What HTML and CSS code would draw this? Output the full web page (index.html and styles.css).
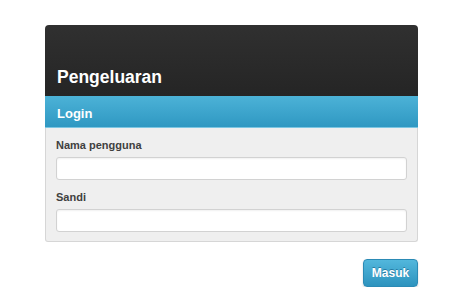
FILE: index.html
```html
<!DOCTYPE html>
<html lang="id">
<head>
<meta charset="utf-8">
<title>Pengeluaran</title>
<link rel="stylesheet" href="styles.css">
</head>
<body>
<div class="page">
  <div class="card">
    <div class="card-header">
      <h1 class="title">Pengeluaran</h1>
    </div>
    <div class="card-bar">Login</div>
    <form class="card-body">
      <label class="label" for="user">Nama pengguna</label>
      <input class="input" id="user" type="text">
      <label class="label label-second" for="pass">Sandi</label>
      <input class="input" id="pass" type="password">
    </form>
  </div>
  <div class="actions">
    <button class="btn" type="button">Masuk</button>
  </div>
</div>
</body>
</html>
```
FILE: styles.css
```css
html, body {
  margin: 0;
  padding: 0;
  background: #ffffff;
}
body {
  font-family: "Liberation Sans", Arial, sans-serif;
}
.page {
  width: 373px;
  margin-left: 45px;
  padding-top: 25px;
}
.card {
  display: flex;
  flex-direction: column;
}
.card-header {
  height: 71px;
  box-sizing: border-box;
  padding: 42px 12px 0;
  background: linear-gradient(#303030, #252525);
  border-radius: 4px 4px 0 0;
}
.title {
  margin: 0;
  font-size: 17.5px;
  line-height: 20px;
  font-weight: bold;
  color: #ffffff;
}
.card-bar {
  height: 32px;
  box-sizing: border-box;
  padding: 10px 12px 0;
  font-size: 13px;
  line-height: 16px;
  font-weight: bold;
  color: #ffffff;
  background: linear-gradient(#4cb2d7, #2f98c2);
  border-bottom: 1px solid #7cc6e2;
}
.card-body {
  display: flex;
  flex-direction: column;
  margin: 0;
  padding: 10px 10px 9px;
  background: #efefef;
  border: 1px solid #d6d6d6;
  border-top: none;
  border-radius: 0 0 3px 3px;
}
.label {
  font-size: 11px;
  line-height: 14px;
  font-weight: bold;
  color: #404040;
  margin-bottom: 5px;
}
.label-second {
  margin-top: 10px;
}
.input {
  height: 23px;
  box-sizing: border-box;
  margin: 0;
  border: 1px solid #d2d2d2;
  border-radius: 3px;
  background: #ffffff;
  box-shadow: inset 0 1px 2px rgba(0,0,0,0.06);
}
.actions {
  display: flex;
  justify-content: flex-end;
  margin-top: 17px;
}
.btn {
  width: 55px;
  height: 28px;
  padding: 0;
  font-family: "Liberation Sans", Arial, sans-serif;
  font-size: 12px;
  font-weight: bold;
  color: #ffffff;
  text-shadow: 0 -1px 0 rgba(0,60,100,0.45);
  background: linear-gradient(#52b7dc, #2d93be);
  border: 1px solid #2b8ab5;
  border-radius: 4px;
  box-shadow: 0 1px 2px rgba(0,0,0,0.18);
}
```
